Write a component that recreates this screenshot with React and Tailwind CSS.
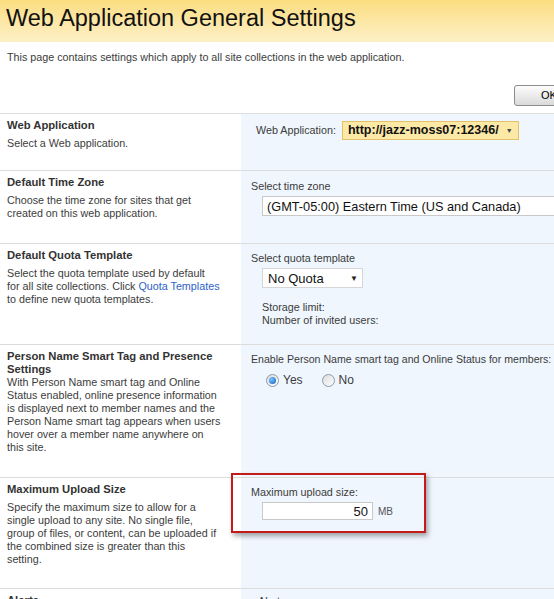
import React from "react";

function Radio({ checked }) {
  return (
    <span className="relative inline-flex h-[13px] w-[13px] items-center justify-center rounded-full border border-[#8a9bb0] bg-gradient-to-br from-[#dcdcdc] to-[#ffffff]">
      {checked && (
        <span className="h-[7px] w-[7px] rounded-full bg-[radial-gradient(circle_at_35%_35%,#7fc4ff,#0a5fb8)]" />
      )}
    </span>
  );
}

function Lines({ lines }) {
  return (
    <div>
      {lines.map((l, i) => (
        <div key={i} className="whitespace-nowrap">
          {l}
        </div>
      ))}
    </div>
  );
}

function Row({ h, title, children, right }) {
  return (
    <div className={`flex border-t border-[#dcdcdc] ${h}`}>
      <div className="w-[241px] shrink-0 bg-white pl-[7px] pr-[10px] pt-[5px] text-[10.75px] leading-[13px] text-[#3c3c3c]">
        <div className="mb-[5px] text-[11.25px] font-bold text-[#333]">{title}</div>
        {children}
      </div>
      <div className="flex-1 bg-[#eff6fd] text-[10.75px] leading-[13px] text-[#3c3c3c]">{right}</div>
    </div>
  );
}

export default function App() {
  return (
    <div className="relative h-[599px] w-[554px] overflow-hidden bg-white font-['Liberation_Sans',Arial,sans-serif]">
      <div className="h-[42px] bg-gradient-to-b from-[#fbdd80] to-[#fdf0c6] pl-[6px] pt-[3px]">
        <h1 className="text-[23.5px] leading-[30px] text-[#111]">Web Application General Settings</h1>
      </div>
      <p className="pl-[7px] pt-[9px] text-[10.75px] leading-[13px] text-[#3c3c3c]">
        This page contains settings which apply to all site collections in the web application.
      </p>
      <div className="flex justify-end pt-[21px]">
        <button className="mr-[-40px] h-[21px] w-[80px] rounded-[3px] border border-[#8c8c8c] bg-gradient-to-b from-[#fdfdfd] to-[#dadada] pl-[26px] text-left text-[11px] text-black">
          OK
        </button>
      </div>
      <div className="mt-[7px]">
        <Row
          h="h-[57px]"
          title="Web Application"
          right={
            <div className="flex items-center pl-[15px] pt-[7px]">
              <span className="mr-[6px]">Web Application:</span>
              <div className="flex h-[19px] w-[177px] items-center border border-[#e3c26e] bg-[#fde9a6] pl-[5px] text-[12.5px] font-bold text-[#111]">
                <span>http://jazz-moss07:12346/</span>
                <span className="ml-[7px] text-[7px] text-[#444]">▼</span>
              </div>
            </div>
          }
        >
          Select a Web application.
        </Row>
        <Row
          h="h-[73px]"
          title="Default Time Zone"
          right={
            <div className="pl-[10px] pt-[9px]">
              <div>Select time zone</div>
              <div className="ml-[11px] mt-[3px] flex h-[20px] w-[320px] items-center border border-[#c9c9c9] bg-white pl-[4px] text-[12.75px] text-[#111]">
                (GMT-05:00) Eastern Time (US and Canada)
              </div>
            </div>
          }
        >
          <Lines lines={["Choose the time zone for sites that get", "created on this web application."]} />
        </Row>
        <Row
          h="h-[101px]"
          title="Default Quota Template"
          right={
            <div className="pl-[10px] pt-[8px]">
              <div>Select quota template</div>
              <div className="ml-[11px] mt-[3px] flex h-[20px] w-[101px] items-center justify-between border border-[#d6d6d6] bg-white pl-[5px] pr-[4px] text-[13px] text-[#111]">
                <span>No Quota</span>
                <span className="text-[8px] text-[#222]">▼</span>
              </div>
              <div className="ml-[11px] mt-[13px]">Storage limit:</div>
              <div className="ml-[11px]">Number of invited users:</div>
            </div>
          }
        >
          <Lines
            lines={[
              "Select the quota template used by default",
              <>
                for all site collections. Click <span className="text-[#2e5fc7]">Quota Templates</span>
              </>,
              "to define new quota templates.",
            ]}
          />
        </Row>
        <Row
          h="h-[133px]"
          title={
            <>
              Person Name Smart Tag and Presence
              <br />
              Settings
            </>
          }
          right={
            <div className="pl-[10px] pt-[8px]">
              <div className="whitespace-nowrap text-[10.6px]">Enable Person Name smart tag and Online Status for members:</div>
              <div className="ml-[15px] mt-[8px] flex items-center text-[12px]">
                <Radio checked />
                <span className="ml-[4px] mr-[19px]">Yes</span>
                <Radio />
                <span className="ml-[4px]">No</span>
              </div>
            </div>
          }
        >
          <div className="-mt-[5px]">
            <Lines
              lines={[
                "With Person Name smart tag and Online",
                "Status enabled, online presence information",
                "is displayed next to member names and the",
                "Person Name smart tag appears when users",
                "hover over a member name anywhere on",
                "this site.",
              ]}
            />
          </div>
        </Row>
        <Row
          h="h-[111px]"
          title="Maximum Upload Size"
          right={
            <div className="pl-[10px] pt-[8px]">
              <div>Maximum upload size:</div>
              <div className="ml-[11px] mt-[3px] flex items-center">
                <div className="flex h-[18px] w-[111px] items-center justify-end border border-[#c9c9c9] bg-white pr-[4px] text-[13px] text-[#111]">
                  50
                </div>
                <span className="ml-[5px] text-[10px] text-[#555]">MB</span>
              </div>
            </div>
          }
        >
          <Lines
            lines={[
              "Specify the maximum size to allow for a",
              "single upload to any site. No single file,",
              "group of files, or content, can be uploaded if",
              "the combined size is greater than this",
              "setting.",
            ]}
          />
        </Row>
        <Row h="h-[40px]" title="Alerts" right={<div className="pl-[17px] pt-[6px]">Alerts on</div>} />
      </div>
      <div className="pointer-events-none absolute left-[231px] top-[473px] h-[60px] w-[195px] border-2 border-[#c41a1a] shadow-[2px_3px_5px_rgba(0,0,0,0.35)]" />
    </div>
  );
}
